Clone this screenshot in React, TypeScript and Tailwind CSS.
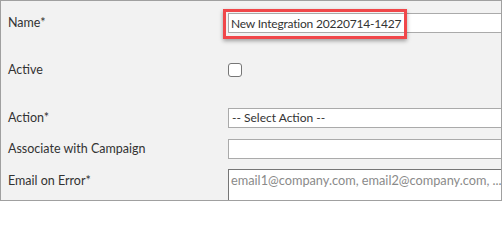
import React from "react";

const font = { fontFamily: "Lato, 'Liberation Sans', sans-serif" };

function Row({ label, top, children }: { label: string; top: string; children: React.ReactNode }) {
  return (
    <div className={`flex items-center h-[20px] ${top}`}>
      <div className="w-[227px] shrink-0 pl-[7px] text-[12.5px] text-[#333]">{label}</div>
      <div className="flex-1 min-w-0">{children}</div>
    </div>
  );
}

export default function App() {
  return (
    <div className="w-[502px] h-[202px] bg-white" style={font}>
      <div className="w-[502px] h-[201px] border border-solid border-[#a0a0a0] bg-[#f2f2f2] overflow-hidden">
        <div className="flex flex-col">
          {/* Name, highlighted */}
          <Row label="Name*" top="mt-[12px]">
            <div className="relative h-[20px]">
              <input
                readOnly
                value="New Integration 20220714-1427"
                className="block w-[300px] h-[20px] border border-[#aaa] bg-white px-[2px] text-[12px] tracking-[-0.2px] text-[#333] outline-none"
                style={font}
              />
              <div className="absolute -left-[5px] -top-[4px] w-[184px] h-[30px] border-[3px] border-[#f0474a] shadow-[0_2px_4px_rgba(0,0,0,0.35)] pointer-events-none" />
            </div>
          </Row>

          <Row label="Active" top="mt-[27px]">
            <div className="w-[14px] h-[14px] rounded-[3px] border border-[#767676] bg-white" />
          </Row>

          <Row label="Action*" top="mt-[28px]">
            <div className="w-[300px] h-[20px] border border-[#aaa] bg-white px-[3px] text-[12px] leading-[18px] text-[#333]">
              -- Select Action --
            </div>
          </Row>

          <Row label="Associate with Campaign" top="mt-[11px]">
            <div className="w-[300px] h-[20px] border border-[#aaa] bg-white" />
          </Row>

          <div className="flex items-start mt-[10px]">
            <div className="w-[227px] shrink-0 pl-[7px] pt-[3px] text-[12.5px] text-[#333]">Email on Error*</div>
            <div className="w-[300px] h-[40px] shrink-0 border border-[#767676] bg-white px-[2px] pt-[1px] text-[12.75px] text-[#8a8a8a] whitespace-nowrap">
              email1@company.com, email2@company.com, ...
            </div>
          </div>
        </div>
      </div>
    </div>
  );
}
